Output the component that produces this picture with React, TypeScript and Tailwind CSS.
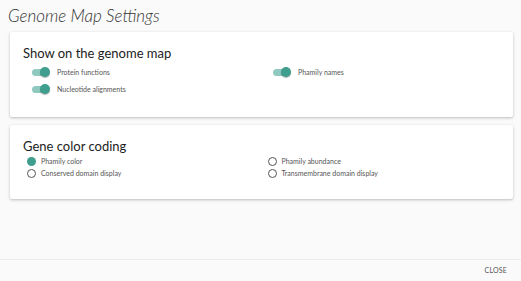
import React from "react";

function Toggle() {
  return (
    <span className="relative inline-block w-[18px] h-[10px] shrink-0">
      <span className="absolute left-0 top-[2px] w-[16px] h-[7px] rounded-full bg-[#8fc9bf]" />
      <span className="absolute right-0 top-0 w-[10px] h-[10px] rounded-full bg-[#3f9e8d] shadow-[0_1px_1px_rgba(0,0,0,0.3)]" />
    </span>
  );
}

function Radio({ on }: { on?: boolean }) {
  return on ? (
    <span className="inline-block w-[9px] h-[9px] rounded-full bg-[#3f9e8d] shrink-0" />
  ) : (
    <span className="inline-block w-[9px] h-[9px] rounded-full border border-[#555] shrink-0" />
  );
}

export default function App() {
  return (
    <div
      className="w-[521px] h-[281px] bg-[#fafafa] flex flex-col text-[#333]"
      style={{ fontFamily: "Lato, 'Open Sans', sans-serif" }}
    >
      <div className="flex-1 px-[10px] pr-[8px]">
        <h1 className="text-[17px] leading-[22px] italic font-light text-[#333] mt-[5px] ml-[-2px]">
          Genome Map Settings
        </h1>
        <div className="mt-[5px] bg-white shadow-[0_1px_3px_rgba(0,0,0,0.25)] rounded-[2px] h-[85px] pt-[13px] px-[13px]">
          <h2 className="text-[13px] leading-[16px] text-[#222]">Show on the genome map</h2>
          <div className="grid grid-cols-2 mt-[6px] pl-[9px]">
            <div className="flex flex-col gap-[7px]">
              <div className="flex items-center gap-[7px] h-[10px]">
                <Toggle />
                <span className="text-[7px] text-[#555]">Protein functions</span>
              </div>
              <div className="flex items-center gap-[7px] h-[10px]">
                <Toggle />
                <span className="text-[7px] text-[#555]">Nucleotide alignments</span>
              </div>
            </div>
            <div className="flex flex-col pl-[7px]">
              <div className="flex items-center gap-[7px] h-[10px]">
                <Toggle />
                <span className="text-[7px] text-[#555]">Phamily names</span>
              </div>
            </div>
          </div>
        </div>
        <div className="mt-[8px] bg-white shadow-[0_1px_3px_rgba(0,0,0,0.25)] rounded-[2px] h-[74px] pt-[13px] px-[13px]">
          <h2 className="text-[13px] leading-[16px] text-[#222]">Gene color coding</h2>
          <div className="grid grid-cols-2 mt-[3px] pl-[4px]">
            <div className="flex flex-col gap-[3px]">
              <div className="flex items-center gap-[5px] h-[9px]">
                <Radio on />
                <span className="text-[7px] text-[#555]">Phamily color</span>
              </div>
              <div className="flex items-center gap-[5px] h-[9px]">
                <Radio />
                <span className="text-[7px] text-[#555]">Conserved domain display</span>
              </div>
            </div>
            <div className="flex flex-col gap-[3px] pl-[4px]">
              <div className="flex items-center gap-[5px] h-[9px]">
                <Radio />
                <span className="text-[7px] text-[#555]">Phamily abundance</span>
              </div>
              <div className="flex items-center gap-[5px] h-[9px]">
                <Radio />
                <span className="text-[7px] text-[#555]">Transmembrane domain display</span>
              </div>
            </div>
          </div>
        </div>
      </div>
      <div className="h-[22px] border-t border-[#ececec] flex items-center justify-end pr-[14px]">
        <span className="text-[7px] text-[#555] tracking-[0.2px]">CLOSE</span>
      </div>
    </div>
  );
}
